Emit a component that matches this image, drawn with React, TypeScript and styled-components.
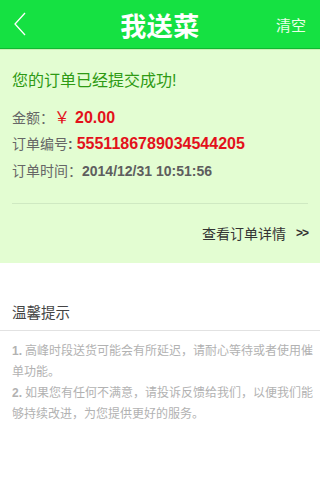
import React from "react";
import styled, { createGlobalStyle } from "styled-components";

const Global = createGlobalStyle`
  html, body { margin: 0; padding: 0; background: #ffffff; }
  body { font-family: "Liberation Sans", "Noto Sans CJK SC", sans-serif; width: 320px; height: 504px; overflow: hidden; }
  * { box-sizing: border-box; }
`;

const Page = styled.div`
  width: 320px;
  height: 504px;
  display: flex;
  flex-direction: column;
  background: #ffffff;
`;

const Header = styled.header`
  height: 49px;
  flex: none;
  background: #15e142;
  border-bottom: 1px solid #10b832;
  display: grid;
  grid-template-columns: 60px 1fr 60px;
  align-items: center;
  color: #ffffff;
`;

const BackBtn = styled.div`
  display: flex;
  align-items: center;
  padding-left: 13px;
  height: 100%;
`;

const Title = styled.h1`
  margin: 0;
  text-align: center;
  font-size: 26px;
  font-weight: bold;
  letter-spacing: 0.5px;
`;

const Clear = styled.div`
  text-align: right;
  padding-right: 14px;
  font-size: 15px;
  color: #eaffe8;
`;

const SuccessPanel = styled.section`
  flex: none;
  background: #e3fdd2;
  border-top: 1px solid #c6f2b2;
  padding: 21px 12px 0 12px;
  height: 214px;
  display: flex;
  flex-direction: column;
`;

const SuccessMsg = styled.div`
  color: #2e9a14;
  font-size: 16px;
  line-height: 20px;
  height: 20px;
  margin-bottom: 14px;
`;

const InfoRow = styled.div`
  display: flex;
  align-items: center;
  height: 26.5px;
  line-height: 26px;
  white-space: nowrap;
`;

const Label = styled.span`
  color: #666666;
  font-size: 14px;
`;

const Value = styled.span<{ $red?: boolean }>`
  font-weight: bold;
  font-size: ${(p) => (p.$red ? "16px" : "14px")};
  color: ${(p) => (p.$red ? "#e3111b" : "#5e5e5e")};
`;

const Colon = styled.span`
  font-weight: bold;
  font-size: 14px;
  color: #5e5e5e;
  margin-right: 4px;
`;

const Yen = styled.span`
  color: #e3111b;
  font-size: 16px;
  margin: 0 5px 0 0;
`;

const Divider = styled.div`
  height: 1px;
  flex: none;
  background: #cfe9c2;
  margin-top: 19px;
`;

const DetailLink = styled.div`
  display: flex;
  justify-content: flex-end;
  align-items: center;
  gap: 10px;
  height: 60px;
  color: #333333;
  font-size: 14px;
`;

const Arrows = styled.span`
  font-weight: bold;
  font-size: 12px;
  letter-spacing: -1px;
`;

const Tips = styled.section`
  padding-top: 38px;
`;

const TipsTitle = styled.div`
  padding: 0 12px;
  font-size: 14.5px;
  color: #444444;
  height: 30px;
  line-height: 24px;
  border-bottom: 1px solid #e2e2e2;
`;

const TipsBody = styled.div`
  padding: 10px 4px 0 12px;
  color: #b2b2b2;
  font-size: 12px;
  line-height: 21px;
`;

const TipItem = styled.p`
  margin: 0;
`;

const Num = styled.b`
  font-weight: bold;
  margin-right: 3px;
`;

export default function App() {
  return (
    <Page>
      <Global />
      <Header>
        <BackBtn>
          <svg width="14" height="24" viewBox="0 0 14 24">
            <polyline points="12,1 2,12 12,23" fill="none" stroke="#ffffff" strokeWidth="1.3" />
          </svg>
        </BackBtn>
        <Title>我送菜</Title>
        <Clear>清空</Clear>
      </Header>
      <SuccessPanel>
        <SuccessMsg>您的订单已经提交成功!</SuccessMsg>
        <InfoRow>
          <Label>金额：</Label>
          <Yen>￥</Yen>
          <Value $red>20.00</Value>
        </InfoRow>
        <InfoRow>
          <Label>订单编号</Label>
          <Colon>:</Colon>
          <Value $red>5551186789034544205</Value>
        </InfoRow>
        <InfoRow>
          <Label>订单时间：</Label>
          <Value>2014/12/31 10:51:56</Value>
        </InfoRow>
        <Divider />
        <DetailLink>
          <span>查看订单详情</span>
          <Arrows>&gt;&gt;</Arrows>
        </DetailLink>
      </SuccessPanel>
      <Tips>
        <TipsTitle>温馨提示</TipsTitle>
        <TipsBody>
          <TipItem>
            <Num>1.</Num>
            <span>高峰时段送货可能会有所延迟，请耐心等待或者使用催单功能。</span>
          </TipItem>
          <TipItem>
            <Num>2.</Num>
            <span>如果您有任何不满意，请投诉反馈给我们，以便我们能够持续改进，为您提供更好的服务。</span>
          </TipItem>
        </TipsBody>
      </Tips>
    </Page>
  );
}
